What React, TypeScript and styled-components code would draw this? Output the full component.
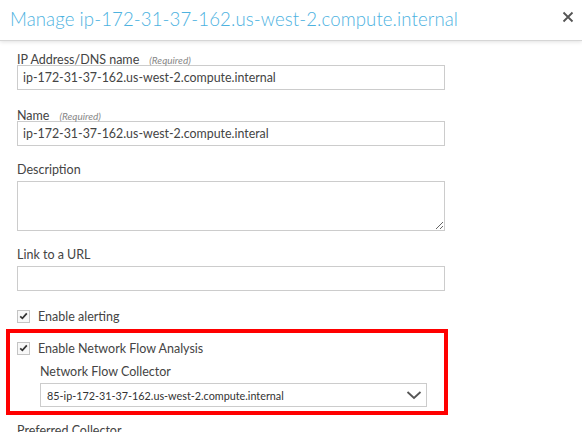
import styled, { createGlobalStyle } from "styled-components";

const GlobalStyle = createGlobalStyle`
    html, body {
        margin: 0;
        padding: 0;
        background: #fff;
        font-family: Lato, "Open Sans", sans-serif;
        color: #444;
    }
    * {
        box-sizing: border-box;
    }
`

const Modal = styled.div`
    width: 582px;
    height: 432px;
    display: flex;
    flex-direction: column;
    background: #fff;
    overflow: hidden;
`

const Header = styled.div`
    height: 41px;
    flex: 0 0 41px;
    display: flex;
    align-items: center;
    justify-content: space-between;
    padding: 0 8px 2px 10px;
    border-bottom: 1px solid #d6d6d6;
    box-shadow: 0 1px 4px rgba(0, 0, 0, 0.12);
    position: relative;
    z-index: 1;
`

const Title = styled.h1`
    margin: 0;
    font-size: 18.6px;
    font-weight: 300;
    color: #4db2df;
    letter-spacing: 0.1px;
`

const Close = styled.button`
    border: 0;
    background: none;
    padding: 0;
    width: 12px;
    height: 12px;
    margin-top: -5px;
    display: flex;
    cursor: pointer;
`

const Body = styled.div`
    flex: 1;
    overflow-y: scroll;
    padding: 10px 137px 40px 17px;

    &::-webkit-scrollbar {
        width: 9px;
    }
    &::-webkit-scrollbar-track {
        background: #fff;
        box-shadow: inset 1px 0 0 #dcdcdc, inset -1px 0 0 #dcdcdc;
    }
    &::-webkit-scrollbar-thumb {
        background: #c9c9c9;
        border: 1px solid #bcbcbc;
    }
`

const Field = styled.div`
    margin-bottom: 17px;
`

// labels marked (Required) sit right on top of their input
const Label = styled.label<{ $tight?: boolean }>`
    display: block;
    font-size: 12.5px;
    line-height: 14px;
    margin-bottom: ${p => (p.$tight ? -2 : 4)}px;
    padding-top: ${p => (p.$tight ? 2 : 0)}px;
    color: #444;
`

const Required = styled.span`
    font-size: 10px;
    font-style: italic;
    color: #888;
    margin-left: 10px;
`

const TextInput = styled.input`
    display: block;
    width: 100%;
    height: 25px;
    border: 1px solid #ccc;
    border-radius: 0;
    padding: 0 5px;
    font-family: Lato, "Open Sans", sans-serif;
    font-size: 12.4px;
    color: #444;
    outline: none;
`

const TextArea = styled.textarea`
    display: block;
    width: 100%;
    height: 50px;
    border: 1px solid #ccc;
    border-radius: 0;
    padding: 4px 5px;
    font-family: Lato, "Open Sans", sans-serif;
    font-size: 12.5px;
    outline: none;
`

const CheckRow = styled.div`
    display: flex;
    align-items: center;
    gap: 8px;
    height: 16px;
    font-size: 12.5px;
    color: #444;
`

const Box = styled.span`
    width: 13px;
    height: 13px;
    border: 1px solid #c4c4c4;
    background: #f8f8f8;
    display: flex;
    align-items: center;
    justify-content: center;
`

const Highlight = styled.div`
    margin: 5px -3px 9px -11px;
    border: 4px solid #f00;
    padding: 7px 17px 4px 7px;
`

const SubField = styled.div`
    padding-left: 23px;
    margin-top: 9px;
`

const SelectBox = styled.div`
    height: 24px;
    border: 1px solid #ccc;
    display: flex;
    align-items: center;
    justify-content: space-between;
    padding: 0 4px 0 6px;
    font-size: 10.8px;
    color: #333;
    background: #fff;
`

const Checkbox = () => (
    <Box>
        <svg width="9" height="8" viewBox="0 0 9 8">
            <path d="M1.2 4.4 L3.4 6.4 L7.8 1.4" fill="none" stroke="#333" strokeWidth="1.7" />
        </svg>
    </Box>
)

const Chevron = () => (
    <svg width="16" height="10" viewBox="0 0 16 10">
        <path d="M1.5 2 L8 8 L14.5 2" fill="none" stroke="#555" strokeWidth="1.8" />
    </svg>
)

const App = () => {
    return (
        <>
            <GlobalStyle />
            <Modal>
                <Header>
                    <Title>Manage ip-172-31-37-162.us-west-2.compute.internal</Title>
                    <Close aria-label="Close">
                        <svg width="12" height="12" viewBox="0 0 12 12">
                            <path d="M1.5 1.5 L10.5 10.5 M10.5 1.5 L1.5 10.5" stroke="#555" strokeWidth="1.8" />
                        </svg>
                    </Close>
                </Header>
                <Body>
                    <Field>
                        <Label $tight>IP Address/DNS name<Required>(Required)</Required></Label>
                        <TextInput defaultValue="ip-172-31-37-162.us-west-2.compute.internal" />
                    </Field>
                    <Field>
                        <Label $tight>Name<Required>(Required)</Required></Label>
                        <TextInput defaultValue="ip-172-31-37-162.us-west-2.compute.interal" />
                    </Field>
                    <Field>
                        <Label>Description</Label>
                        <TextArea />
                    </Field>
                    <Field>
                        <Label>Link to a URL</Label>
                        <TextInput />
                    </Field>
                    <CheckRow>
                        <Checkbox />
                        Enable alerting
                    </CheckRow>
                    <Highlight>
                        <CheckRow>
                            <Checkbox />
                            Enable Network Flow Analysis
                        </CheckRow>
                        <SubField>
                            <Label>Network Flow Collector</Label>
                            <SelectBox>
                                85-ip-172-31-37-162.us-west-2.compute.internal
                                <Chevron />
                            </SelectBox>
                        </SubField>
                    </Highlight>
                    <Field>
                        <Label>Preferred Collector</Label>
                        <SelectBox>
                            85-ip-172-31-37-162.us-west-2.compute.internal
                            <Chevron />
                        </SelectBox>
                    </Field>
                    <Field>
                        <Label>Groups</Label>
                        <TextInput />
                    </Field>
                </Body>
            </Modal>
        </>
    )
}

export default App
